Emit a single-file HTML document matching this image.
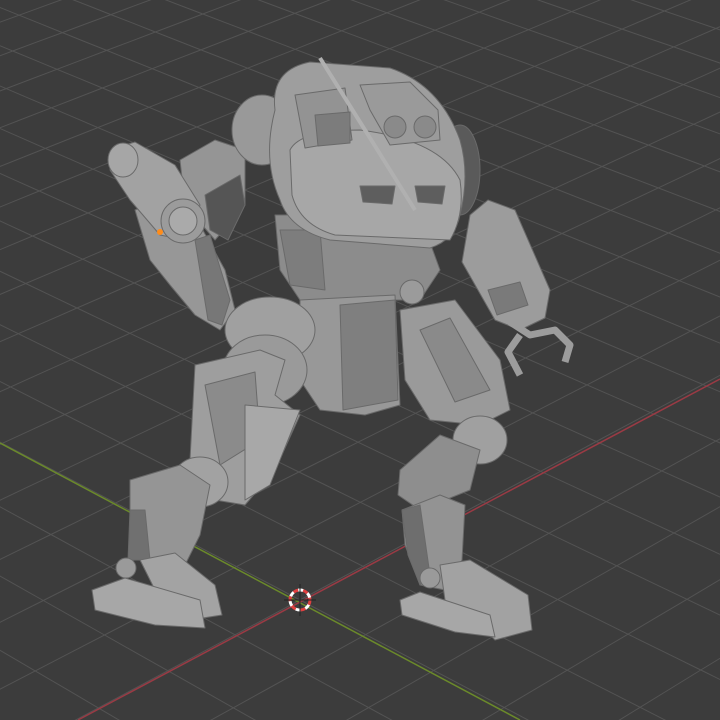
<!DOCTYPE html>
<html><head><meta charset="utf-8"><style>
html,body{margin:0;padding:0;background:#3c3c3c;width:720px;height:720px;overflow:hidden}
svg{display:block;overflow:hidden}
</style></head><body>
<svg id="s" width="720" height="720" viewBox="0 0 720 720" xmlns="http://www.w3.org/2000/svg">
<rect width="720" height="720" fill="#3c3c3c"/>
<g id="grid" stroke="#535353" stroke-width="1" fill="none"></g>
<line x1="0" y1="443" x2="520" y2="720" stroke="#6b8a2a" stroke-width="1.5"/>
<line x1="78" y1="720" x2="720" y2="379" stroke="#9a3a44" stroke-width="1.5"/>
<g stroke="#6a6a6a" stroke-width="1" stroke-linejoin="round">
<polygon points="470,215 488,200 515,210 550,290 545,318 520,330 495,320 462,262" fill="#9c9c9c"/>
<polygon points="488,290 520,282 528,305 497,315" fill="#7a7a7a"/>
<path d="M510,322 L530,335 L555,330 L570,345 L565,362 M520,335 L508,352 L520,375" stroke="#9c9c9c" stroke-width="7" fill="none"/>
<polygon points="400,310 455,300 500,360 510,410 480,425 430,420 405,380" fill="#9a9a9a"/>
<polygon points="420,330 450,318 490,390 455,402" fill="#8a8a8a"/>
<ellipse cx="480" cy="440" rx="27" ry="24" fill="#a0a0a0"/>
<polygon points="400,470 440,435 480,450 470,490 420,510 398,495" fill="#8e8e8e"/>
<polygon points="402,510 440,495 465,505 462,560 445,590 420,585 405,545" fill="#939393"/>
<polygon points="402,510 420,505 430,575 420,585 408,555" fill="#6e6e6e"/>
<circle cx="430" cy="578" r="10" fill="#9a9a9a"/>
<polygon points="440,565 470,560 528,595 532,630 495,640 470,615 445,600" fill="#a2a2a2"/>
<polygon points="400,600 420,592 490,615 495,637 455,632 402,615" fill="#a7a7a7"/>
<polygon points="180,160 215,140 245,150 245,205 215,240 185,205" fill="#959595"/>
<polygon points="205,195 240,175 245,205 228,240 210,230" fill="#555"/>
<polygon points="135,210 160,200 200,225 225,270 235,310 220,330 195,315 170,285 150,260" fill="#979797"/>
<polygon points="115,148 135,142 175,165 200,205 185,240 160,235 130,200 110,170" fill="#a2a2a2"/>
<ellipse cx="123" cy="160" rx="15" ry="17" fill="#a6a6a6"/>
<circle cx="183" cy="221" r="22" fill="#9b9b9b"/>
<circle cx="183" cy="221" r="14" fill="#aaaaaa"/>
<polygon points="195,240 210,235 230,300 222,325 208,320" fill="#777"/>
<circle cx="160" cy="232" r="3" fill="#ff8c1a" stroke="none"/>
<ellipse cx="262" cy="130" rx="30" ry="35" fill="#999"/>
<ellipse cx="460" cy="170" rx="20" ry="45" fill="#5a5a5a"/>
<polygon points="275,215 420,215 440,270 420,300 300,300 280,270" fill="#8c8c8c"/>
<polygon points="280,230 320,230 325,290 290,285" fill="#7d7d7d"/>
<path d="M275,110 Q270,70 310,62 L390,68 Q440,85 460,140 Q470,175 460,215 Q455,240 430,248 L330,240 Q290,230 280,200 Q262,160 275,110 Z" fill="#9e9e9e"/>
<path d="M290,150 Q300,130 360,130 Q440,140 460,180 Q465,215 450,240 L335,235 Q300,225 292,195 Z" fill="#a7a7a7"/>
<polygon points="295,95 345,88 352,140 305,148" fill="#939393"/>
<polygon points="315,115 350,112 350,143 318,146" fill="#7c7c7c"/>
<polygon points="360,85 410,82 438,110 440,140 390,145 370,110" fill="#9a9a9a"/>
<circle cx="395" cy="127" r="11" fill="#8a8a8a"/><circle cx="425" cy="127" r="11" fill="#8a8a8a"/>
<line x1="320" y1="58" x2="415" y2="210" stroke="#b0b0b0" stroke-width="4"/>
<polygon points="360,186 395,186 392,204 363,202" fill="#5e5e5e"/>
<polygon points="415,186 445,186 442,204 418,202" fill="#5e5e5e"/>
<circle cx="412" cy="292" r="12" fill="#9b9b9b"/>
<polygon points="300,300 395,295 400,405 365,415 320,410 300,380" fill="#989898"/>
<polygon points="340,305 395,300 398,400 343,410" fill="#7f7f7f"/>
<ellipse cx="270" cy="330" rx="45" ry="33" fill="#a0a0a0"/>
<ellipse cx="265" cy="370" rx="42" ry="35" fill="#9a9a9a"/>
<polygon points="195,365 260,350 285,360 275,395 300,415 275,470 245,505 215,500 190,460" fill="#9e9e9e"/>
<polygon points="205,385 255,372 260,440 220,465" fill="#8b8b8b"/>
<polygon points="245,405 300,410 270,485 245,500" fill="#a8a8a8"/>
<ellipse cx="200" cy="482" rx="28" ry="25" fill="#a2a2a2"/>
<polygon points="130,480 180,465 210,485 200,535 185,565 150,565 130,545" fill="#959595"/>
<polygon points="130,510 145,510 150,560 128,560" fill="#707070"/>
<circle cx="126" cy="568" r="10" fill="#9a9a9a"/>
<polygon points="140,560 175,553 215,585 222,615 190,620 160,600" fill="#a3a3a3"/>
<polygon points="92,590 125,578 200,600 205,628 155,625 95,610" fill="#a7a7a7"/>
</g>
<circle cx="300" cy="600" r="10" fill="none" stroke="#e04040" stroke-width="3" stroke-dasharray="5 5"/>
<circle cx="300" cy="600" r="10" fill="none" stroke="#ffffff" stroke-width="3" stroke-dasharray="5 5" stroke-dashoffset="5"/>
<line x1="300" y1="584" x2="300" y2="616" stroke="#222" stroke-width="1"/>
<line x1="284" y1="600" x2="316" y2="600" stroke="#222" stroke-width="1"/>
</svg>
<script>
(function(){
var g=document.getElementById('grid');
var O=[300,600],Vr=[4300,-1540],Vg=[-3500,-1400],a=0.016,b=0.017;
function P(u,v){var w=a*u+b*v+1;return [(a*u*Vr[0]+b*v*Vg[0]+O[0])/w,(a*u*Vr[1]+b*v*Vg[1]+O[1])/w,w];}
var s='';
function seg(f){var pts=[];for(var t=-60;t<=60;t+=0.5){var p=f(t);if(p[2]>0.05&&p[0]>-800&&p[0]<1500&&p[1]>-200&&p[1]<1000)pts.push(p[0].toFixed(1)+','+p[1].toFixed(1));}
 if(pts.length>1)s+='<polyline points="'+pts.join(' ')+'"/>';}
for(var k=-40;k<=40;k++){(function(k){seg(function(t){return P(k,t)});seg(function(t){return P(t,k)});})(k);}
g.innerHTML=s;
})();
</script>
</body></html>
